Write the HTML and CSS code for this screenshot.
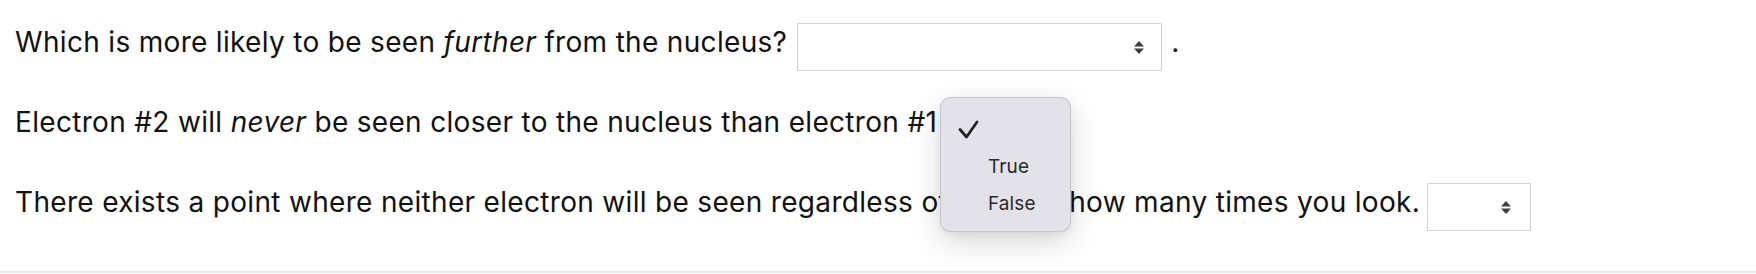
FILE: index.html
```html
<!DOCTYPE html>
<html lang="en">
<head>
<meta charset="utf-8">
<title>Question</title>
<link rel="stylesheet" href="styles.css">
</head>
<body>
<div class="question">
  <div class="row">
    <span class="txt">Which is more likely to be seen <em>further</em> from the nucleus?</span>
    <span class="select select-wide">
      <svg class="arrows" width="10" height="13" viewBox="0 0 10 13"><path d="M5 0 L10 5.5 L0 5.5 Z M0 7.5 L10 7.5 L5 13 Z" fill="#3e3e3e"/></svg>
    </span>
    <span class="txt dot">.</span>
  </div>
  <div class="row">
    <span class="txt">Electron #2 will <em>never</em> be seen closer to the nucleus than electron #1</span>
    <span class="select select-narrow select-open">
      <svg class="arrows" width="10" height="13" viewBox="0 0 10 13"><path d="M5 0 L10 5.5 L0 5.5 Z M0 7.5 L10 7.5 L5 13 Z" fill="#3e3e3e"/></svg>
    </span>
  </div>
  <div class="row">
    <span class="txt">There exists a point where neither electron will be seen regardless of</span>
    <span class="spacer"></span>
    <span class="txt">how many times you look.</span>
    <span class="select select-narrow select-last">
      <svg class="arrows" width="10" height="13" viewBox="0 0 10 13"><path d="M5 0 L10 5.5 L0 5.5 Z M0 7.5 L10 7.5 L5 13 Z" fill="#3e3e3e"/></svg>
    </span>
  </div>
</div>
<div class="footer-line"></div>

<div class="popup">
  <div class="item">
    <span class="check">
      <svg width="22" height="21" viewBox="0 0 22 21"><path d="M3 10.5 L9.5 18 L20 3" fill="none" stroke="#222" stroke-width="2.8" stroke-linecap="round" stroke-linejoin="round"/></svg>
    </span>
    <span class="label"></span>
  </div>
  <div class="item"><span class="check"></span><span class="label">True</span></div>
  <div class="item"><span class="check"></span><span class="label">False</span></div>
</div>
</body>
</html>
```
FILE: styles.css
```css
html, body {
  margin: 0;
  padding: 0;
  background: #ffffff;
}

body {
  font-family: "Inter", "Liberation Sans", sans-serif;
  color: #111111;
  position: relative;
  width: 1756px;
  height: 274px;
  overflow: hidden;
}

.question {
  padding: 23px 0 0 15px;
  display: flex;
  flex-direction: column;
  gap: 32px;
}

.row {
  display: flex;
  align-items: flex-start;
  height: 48px;
}

.txt {
  font-size: 28px;
  letter-spacing: 0.32px;
  line-height: 34px;
  margin-top: 2px;
  white-space: pre;
}

.txt em {
  font-style: italic;
}

.select {
  box-sizing: border-box;
  height: 48px;
  border: 1px solid #cfd3d8;
  border-radius: 1px;
  background: #ffffff;
  display: flex;
  align-items: center;
  justify-content: flex-end;
  padding-right: 17px;
}

.select-wide {
  width: 365px;
  margin-left: 10px;
}

.select-narrow {
  width: 104px;
  padding-right: 19px;
}

.select-open {
  margin-left: 12px;
}

.select-last {
  margin-left: 7px;
}

.dot {
  margin-left: 9px;
}

.spacer {
  width: 120px;
  flex: none;
}

.footer-line {
  position: absolute;
  left: 0;
  right: 0;
  top: 271px;
  height: 2px;
  background: #e8ebef;
}

.popup {
  position: absolute;
  left: 940px;
  top: 97px;
  width: 131px;
  height: 135px;
  box-sizing: border-box;
  padding: 13px 0 11px;
  background: #e4e2e9;
  border: 1px solid rgba(0, 0, 0, 0.12);
  border-radius: 11px;
  box-shadow: 0 10px 30px rgba(0, 0, 0, 0.16), 0 2px 6px rgba(0, 0, 0, 0.06);
}

.item {
  height: 37px;
  display: flex;
  align-items: center;
  padding-left: 16px;
}

.check {
  width: 31px;
  height: 21px;
  flex: none;
  display: flex;
  align-items: center;
}

.check svg {
  display: block;
}

.label {
  font-family: "Inter", "Liberation Sans", sans-serif;
  font-size: 19px;
  color: #2b2b2b;
  letter-spacing: 0.1px;
}
```
